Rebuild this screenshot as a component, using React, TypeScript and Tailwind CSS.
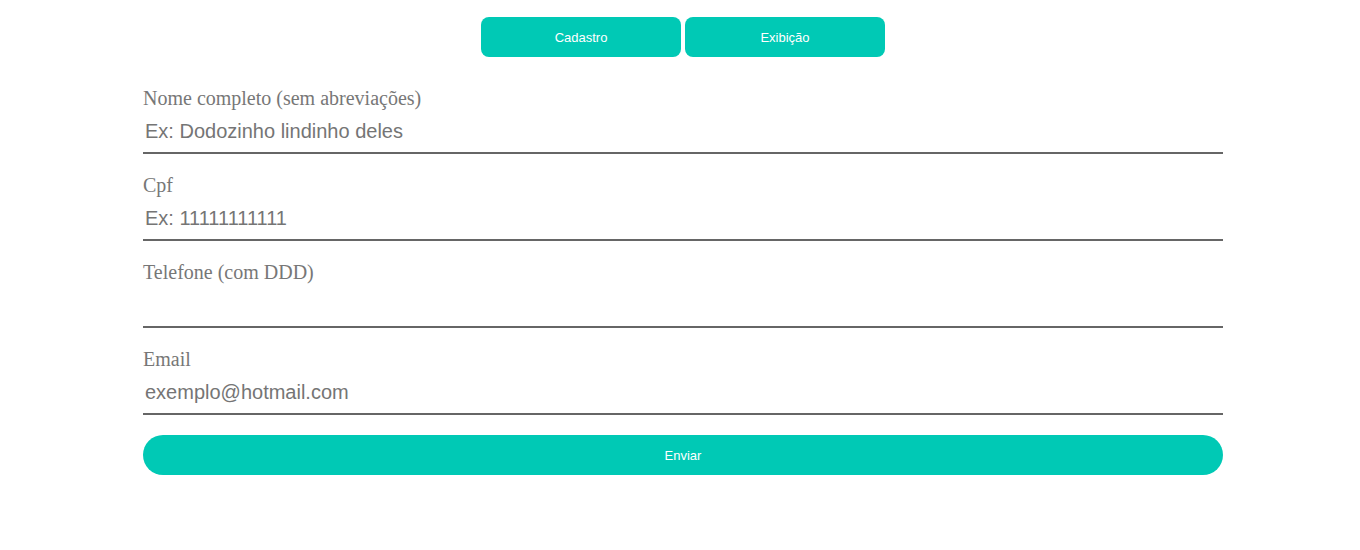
import React from 'react';

const fields = [
  { label: 'Nome completo (sem abreviações)', placeholder: 'Ex: Dodozinho lindinho deles', type: 'text' },
  { label: 'Cpf', placeholder: 'Ex: 11111111111', type: 'text' },
  { label: 'Telefone (com DDD)', placeholder: '', type: 'tel' },
  { label: 'Email', placeholder: 'exemplo@hotmail.com', type: 'email' },
];

export default function App() {
  return (
    <div className="min-h-[550px] bg-white font-['Liberation_Sans',Arial,sans-serif]">
      {/* abas */}
      <div className="flex justify-center gap-[4px] pt-[17px] pl-[6px]">
        <button className="h-[40px] w-[200px] rounded-[8px] bg-[#00c9b5] pt-[2px] text-[13px] text-white">Cadastro</button>
        <button className="h-[40px] w-[200px] rounded-[8px] bg-[#00c9b5] pt-[2px] text-[13px] text-white">Exibição</button>
      </div>

      {/* formulário */}
      <form className="ml-[143px] mt-[30px] flex w-[1080px] flex-col gap-[20px]" onSubmit={(e) => e.preventDefault()}>
        {fields.map((f) => (
          <div key={f.label} className="flex flex-col">
            <label className="h-[23px] font-['Liberation_Serif','Times_New_Roman',serif] text-[20px] leading-[23px] text-[#777]">
              {f.label}
            </label>
            <input
              type={f.type}
              placeholder={f.placeholder}
              className="h-[44px] w-full border-b-2 border-[#666] pl-[2px] text-[20px] text-[#333] outline-none placeholder:text-[#757575]"
            />
          </div>
        ))}
        <button type="submit" className="h-[40px] w-full rounded-full bg-[#00c9b5] pt-[2px] text-[13px] text-white">
          Enviar
        </button>
      </form>
    </div>
  );
}
